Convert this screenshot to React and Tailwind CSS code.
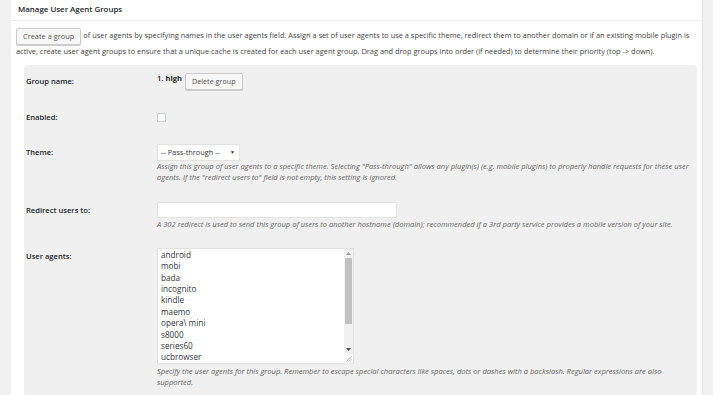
export default function App() {
  const agents = ["android", "mobi", "bada", "incognito", "kindle", "maemo", "opera\\ mini", "s8000", "series60", "ucbrowser"];
  return (
    <div className="w-[713px] h-[395px] overflow-hidden bg-[#f1f1f1] flex font-['Open_Sans',sans-serif] text-[#444]">
      <div className="w-[11px] shrink-0" />
      <div className="flex-1 bg-white flex flex-col border-r border-[#e5e5e5]">
        <div className="h-[21px] shrink-0 border-b border-[#eeeeee] pl-[7px] flex items-center text-[7.9px] font-semibold text-[#23282d]">
          Manage User Agent Groups
        </div>
        <div className="px-[5px] pt-[7px]">
          <p className="text-[7.42px] leading-[13px] mr-[-4px]">
            <span className="inline-flex items-center justify-center h-[17px] px-[6px] mr-[2px] align-middle bg-[#f7f7f7] border border-[#cccccc] rounded-[2px] text-[#555] shadow-[0_1px_0_#ccc]">
              Create a group
            </span>
            of user agents by specifying names in the user agents field. Assign a set of user agents to use a specific theme, redirect them to another domain or if an existing mobile plugin is active, create user agent groups to ensure that a unique cache is created for each user agent group. Drag and drop groups into order (if needed) to determine their priority (top -&gt; down).
          </p>
          <div className="mt-[7px] ml-[8px] bg-[#f0f0f0] rounded-[4px] pl-[2px] pr-[4px] pt-[8px] pb-[7px] flex flex-col">
            <div className="flex h-[17px]">
              <div className="w-[131px] shrink-0 flex items-center pt-[1px] text-[7.6px] font-semibold text-[#23282d]">Group name:</div>
              <div className="flex items-start">
                <span className="text-[7.6px] leading-[10px] text-[#23282d] font-semibold">1. <span className="font-bold">high</span></span>
                <span className="ml-[3px] inline-flex items-center h-[17px] px-[6px] bg-[#f7f7f7] border border-[#cccccc] rounded-[2px] text-[7.2px] text-[#555] shadow-[0_1px_0_#ccc]">Delete group</span>
              </div>
            </div>
            <div className="flex mt-[23px] h-[9px] items-center">
              <div className="w-[131px] shrink-0 text-[7.6px] font-semibold text-[#23282d]">Enabled:</div>
              <div className="w-[9px] h-[9px] bg-white border border-[#c8ccd0]" />
            </div>
            <div className="flex mt-[22px]">
              <div className="w-[131px] shrink-0 h-[17px] flex items-center pt-[1px] text-[7.6px] font-semibold text-[#23282d]">Theme:</div>
              <div className="flex-1">
                <div className="w-[83px] h-[17px] bg-white border border-[#e2e2e2] flex items-center justify-between pl-[3px] pr-[4px] text-[7.4px] text-[#32373c]">
                  <span>-- Pass-through --</span>
                  <span className="text-[5px]">▼</span>
                </div>
                <p className="text-[7.55px] leading-[11.4px] italic text-[#666] pr-[2px]">
                  Assign this group of user agents to a specific theme. Selecting "Pass-through" allows any plugin(s) (e.g. mobile plugins) to properly handle requests for these user agents. If the "redirect users to" field is not empty, this setting is ignored.
                </p>
              </div>
            </div>
            <div className="flex mt-[18px]">
              <div className="w-[131px] shrink-0 h-[16px] flex items-center pt-[1px] text-[7.6px] font-semibold text-[#23282d]">Redirect users to:</div>
              <div className="flex-1">
                <div className="w-[240px] h-[16px] bg-white border border-[#e2e2e2]" />
                <p className="text-[7.55px] leading-[12px] italic text-[#666]">
                  A 302 redirect is used to send this group of users to another hostname (domain); recommended if a 3rd party service provides a mobile version of your site.
                </p>
              </div>
            </div>
            <div className="flex mt-[18px]">
              <div className="w-[131px] shrink-0 pt-[3px] text-[7.6px] leading-[11px] font-semibold text-[#23282d]">User agents:</div>
              <div className="flex-1">
                <div className="w-[197px] h-[116px] bg-white border border-[#e2e2e2] flex">
                  <div className="flex-1 pl-[3px] pt-0 text-[8.2px] leading-[11.4px] text-[#32373c]">
                    {agents.map((a) => (
                      <div key={a}>{a}</div>
                    ))}
                  </div>
                  <div className="w-[9px] shrink-0 flex flex-col bg-[#f1f1f1]">
                    <div className="h-[9px] flex items-center justify-center">
                      <svg width="5" height="3" viewBox="0 0 5 3"><path d="M0 3 L2.5 0 L5 3 Z" fill="#a3a3a3" /></svg>
                    </div>
                    <div className="h-[66px] mx-[1px] bg-[#c1c1c1]" />
                    <div className="flex-1" />
                    <div className="h-[9px] flex items-center justify-center">
                      <svg width="5" height="3" viewBox="0 0 5 3"><path d="M0 0 L2.5 3 L5 0 Z" fill="#505050" /></svg>
                    </div>
                    <div className="h-[9px] bg-white flex items-end justify-end pr-[1px] pb-[1px]">
                      <svg width="6" height="6" viewBox="0 0 6 6"><path d="M5.5 0.5 L0.5 5.5 M5.5 3 L3 5.5" stroke="#9a9a9a" strokeWidth="0.7" /></svg>
                    </div>
                  </div>
                </div>
                <p className="pt-[2px] text-[7.55px] leading-[11.6px] italic text-[#666] pr-[2px]">
                  Specify the user agents for this group. Remember to escape special characters like spaces, dots or dashes with a backslash. Regular expressions are also supported.
                </p>
              </div>
            </div>
          </div>
        </div>
      </div>
      <div className="w-[10px] shrink-0" />
    </div>
  );
}
